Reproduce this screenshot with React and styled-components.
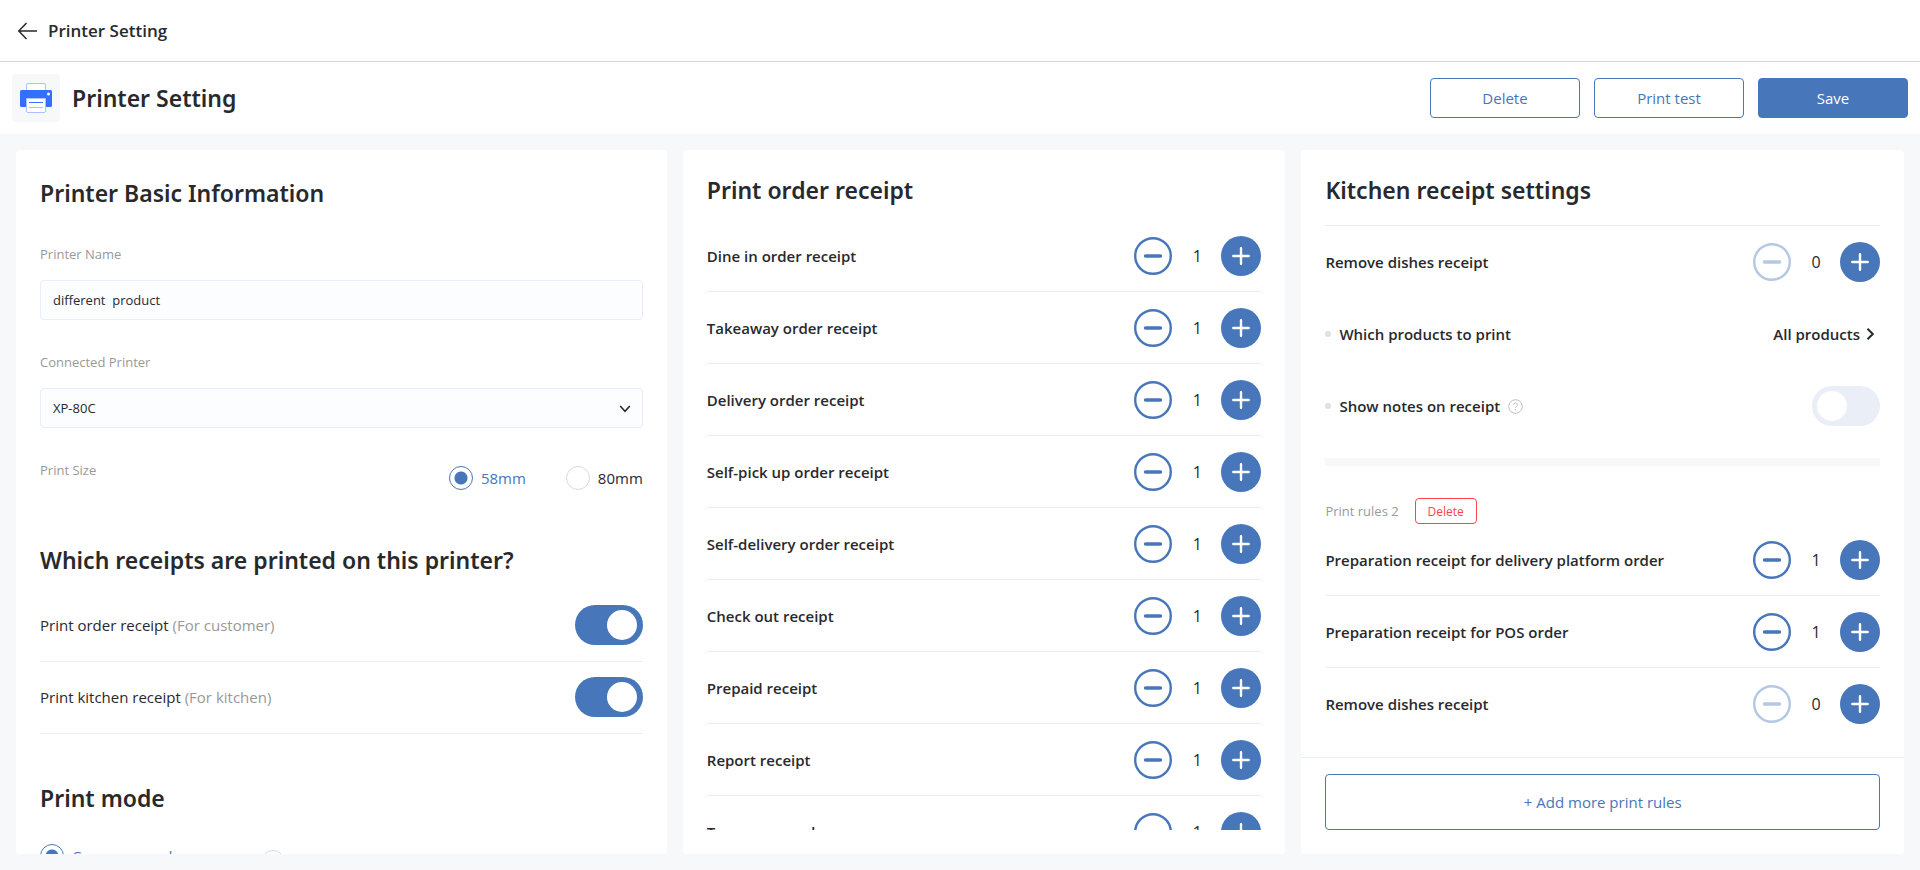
import React, { useState } from "react";
import styled, { createGlobalStyle } from "styled-components";

const blue = "#4776ba";
const ink = "#28292d";
const grey = "#999999";
const line = "#e6eef8";
const pale = "#f7f8fa";

const GlobalStyle = createGlobalStyle`
  * {
    box-sizing: border-box;
  }
  body {
    margin: 0;
    color: ${ink};
    background-color: ${pale};
    font-family: "Open Sans", "Noto Sans", sans-serif;
    font-size: 16px;
    line-height: 24px;
  }
  h1, h2 {
    font-family: "Noto Sans", "Open Sans", sans-serif;
    font-size: 23px;
    font-weight: 600;
  }
  button, input, select {
    font-family: inherit;
  }
`;

const Page = styled.div`
  height: 100vh;
  display: flex;
  flex-direction: column;
`;

const TopBar = styled.nav`
  height: 62px;
  flex-shrink: 0;
  padding: 0 16px;
  display: flex;
  align-items: center;
  background-color: white;
  border-bottom: 1px solid #d2d4dc;
`;

const BackLink = styled.a`
  display: flex;
  align-items: center;
  gap: 8px;
  color: ${ink};
  font-size: 17px;
  font-weight: 600;
  text-decoration: none;
`;

const Header = styled.header`
  height: 72px;
  flex-shrink: 0;
  padding: 0 12px;
  display: flex;
  align-items: center;
  background-color: white;
`;

const IconBox = styled.div`
  width: 48px;
  height: 48px;
  margin-right: 12px;
  border-radius: 4px;
  background-color: ${pale};
`;

const Title = styled.h1`
  margin: 0;
  line-height: 33px;
`;

const Actions = styled.div`
  margin-left: auto;
  display: flex;
  gap: 14px;
`;

const Button = styled.button`
  width: 150px;
  height: 40px;
  border: 1px solid ${blue};
  border-radius: 4px;
  color: ${(p) => (p.$filled ? "white" : blue)};
  background-color: ${(p) => (p.$filled ? blue : "white")};
  font-size: 15px;
  cursor: pointer;
`;

const Main = styled.main`
  flex: 1;
  min-height: 0;
  padding: 16px;
  display: grid;
  grid-template-columns: 1.08fr 1fr 1fr;
  grid-template-rows: minmax(0, 1fr);
  gap: 16px;
`;

const Card = styled.section`
  min-width: 0;
  display: flex;
  flex-direction: column;
  overflow: hidden;
  border-radius: 4px;
  background-color: white;
`;

const Scroll = styled.div`
  flex: 1;
  min-height: 0;
  padding: ${(p) => (p.$padded ? "24px" : "0 24px")};
  overflow-y: auto;
  scrollbar-width: none;
`;

const CardFoot = styled.div`
  height: 24px;
  flex-shrink: 0;
`;

const CardTitle = styled.h2`
  margin: 24px 24px ${(p) => (p.$ruled ? 18 : 13)}px;
  line-height: 33px;
`;

const FormTitle = styled.h2`
  margin: 0 0 32px;
  line-height: 38px;
`;

const SectionTitle = styled.h2`
  margin: 48px 0 13px;
  line-height: 33px;
`;

const Field = styled.div`
  display: flex;
  flex-direction: column;
  gap: 16px;
  margin-bottom: 32px;
`;

const Label = styled.label`
  color: ${grey};
  font-size: 13px;
  line-height: 20px;
`;

const Input = styled.input`
  height: 40px;
  width: 100%;
  padding: 0 12px;
  border: 1px solid #e6edfb;
  border-radius: 4px;
  color: ${ink};
  background-color: #fcfdff;
  font-size: 13px;
`;

const SelectWrap = styled.div`
  display: grid;
  align-items: center;

  > * {
    grid-area: 1 / 1;
  }
  svg {
    justify-self: end;
    margin-right: 12px;
    pointer-events: none;
  }
`;

const Select = styled.select`
  height: 40px;
  width: 100%;
  padding: 0 12px;
  appearance: none;
  border: 1px solid #e6edfb;
  border-radius: 4px;
  color: ${ink};
  background-color: #fcfdff;
  font-size: 13px;
`;

const SizeRow = styled.div`
  display: flex;
  justify-content: space-between;
  align-items: flex-start;
`;

const SizeLabel = styled.span`
  color: ${grey};
  font-size: 13px;
  line-height: 20px;
`;

const SizeOptions = styled.div`
  height: 36px;
  display: flex;
  align-items: center;
  gap: 40px;
`;

const ModeOptions = styled.div`
  padding-top: 16px;
  display: flex;
  align-items: flex-start;
  gap: 80px;
`;

const RadioLabel = styled.label`
  display: flex;
  align-items: center;
  gap: 8px;
  padding-top: ${(p) => (p.$lower ? 6 : 0)}px;
  font-size: 15px;
  color: ${(p) => (p.$on ? blue : ink)};
`;

const Radio = styled.input`
  appearance: none;
  width: 24px;
  height: 24px;
  margin: 0;
  border: 1px solid #d5d9e2;
  border-radius: 50%;

  &:checked {
    border-color: ${blue};
    background: radial-gradient(circle, ${blue} 6px, transparent 7px);
  }
`;

const ToggleRow = styled.label`
  padding: 15px 0 16px;
  display: flex;
  justify-content: space-between;
  align-items: center;
  border-bottom: 1px solid ${line};
  font-size: 15px;
`;

const Muted = styled.span`
  color: ${grey};
`;

const Toggle = styled.input`
  appearance: none;
  width: 68px;
  height: 40px;
  margin: 0;
  padding: 5px;
  display: flex;
  border-radius: 20px;
  background-color: #e9eef7;
  cursor: pointer;

  &::before {
    content: "";
    width: 30px;
    height: 30px;
    border-radius: 50%;
    background-color: white;
  }
  &:checked {
    padding-right: 6px;
    justify-content: flex-end;
    background-color: ${blue};
  }
`;

const Row = styled.div`
  height: 72px;
  padding: 16px 0 15px;
  display: flex;
  align-items: center;
  border-bottom: 1px solid ${(p) => (p.$plain ? "transparent" : line)};
  font-size: 15px;
  font-weight: 600;
`;

const RowEnd = styled.div`
  margin-left: auto;
  display: flex;
  align-items: center;
`;

const Rule = styled.hr`
  height: ${(p) => p.$size}px;
  margin: 0;
  border: none;
  background-color: ${(p) => (p.$size > 1 ? pale : line)};
`;

const RuleGap = styled.div`
  height: 16px;
`;

const RoundButton = styled.button`
  width: 40px;
  height: 40px;
  padding: 0;
  display: block;
  border: none;
  background: none;
  cursor: pointer;

  &:disabled {
    opacity: 0.4;
    cursor: default;
  }
  svg {
    display: block;
  }
`;

const Count = styled.output`
  width: 48px;
  text-align: center;
  font-size: 16px;
  font-weight: 400;
`;

const Dot = styled.span`
  width: 6px;
  height: 6px;
  margin-right: 8px;
  border-radius: 50%;
  background-color: #e0e1e3;
`;

const HelpButton = styled.button`
  margin-left: 8px;
  padding: 0;
  display: flex;
  border: none;
  background: none;
`;

const LinkButton = styled.button`
  padding: 0 4px 0 0;
  display: flex;
  align-items: center;
  gap: 4px;
  border: none;
  background: none;
  color: ${ink};
  font-size: 15px;
  font-weight: 600;
`;

const RuleHead = styled.div`
  margin-top: 32px;
  display: flex;
  align-items: center;
  gap: 16px;
  color: ${grey};
  font-size: 13px;
`;

const DeleteRule = styled.button`
  width: 62px;
  height: 26px;
  padding: 0;
  border: 1px solid #ff4448;
  border-radius: 4px;
  color: #ff4448;
  background-color: white;
  font-size: 12px;
`;

const Footer = styled.footer`
  padding: 16px 24px 24px;
  border-top: 1px solid ${line};
`;

const AddButton = styled(Button)`
  display: block;
  width: 100%;
  height: 56px;
`;

const BackArrow = () => (
  <svg width="24" height="24" viewBox="0 0 24 24" fill="none" stroke={ink} strokeWidth="1.5">
    <path d="M21 12H3M10.5 4L2.8 12l7.7 8" />
  </svg>
);

const PrinterIcon = () => (
  <svg width="48" height="48" viewBox="0 0 48 48" fill="none">
    <rect x="14.5" y="9.5" width="19" height="10" rx="1.5" fill="white" stroke="#a9c2ff" />
    <rect x="8" y="16" width="32" height="17" rx="1.5" fill="#3370ff" />
    <path d="M14.5 24.5h19V37a1.5 1.5 0 0 1-1.5 1.5H16a1.5 1.5 0 0 1-1.5-1.5z" fill="white" stroke="#a9c2ff" />
    <path d="M17 28.5h14" stroke="#3370ff" />
    <path d="M17 33.5h14" stroke="#a9c2ff" />
    <circle cx="36.5" cy="20" r="1.5" fill="white" />
  </svg>
);

const Chevron = ({ down }) => (
  <svg width="12" height="12" viewBox="0 0 12 12" fill="none" stroke={ink} strokeWidth={down ? 1.6 : 2}>
    <path d={down ? "M1.2 4L6 9.2 10.8 4" : "M3.5 0.7L8.8 6l-5.3 5.3"} />
  </svg>
);

const HelpIcon = () => (
  <svg width="15" height="15" viewBox="0 0 15 15" fill="none" stroke="#bfbfbf">
    <circle cx="7.5" cy="7.5" r="6.8" />
    <path d="M5.6 5.9a1.9 1.9 0 1 1 2.7 1.7c-.6.3-.8.5-.8 1.200M7.5 10v1.200" />
  </svg>
);

const Stepper = ({ name, start }) => {
  const [count, setCount] = useState(start);
  return (
    <RowEnd>
      <RoundButton
        aria-label={`Decrease ${name}`}
        disabled={count === 0}
        onClick={() => setCount(count - 1)}
      >
        <svg width="40" height="40" viewBox="0 0 40 40" fill="none" stroke={blue}>
          <circle cx="20" cy="20" r="17.8" strokeWidth="2.4" />
          <path d="M12.5 20h15" strokeWidth="3.4" strokeLinecap="round" />
        </svg>
      </RoundButton>
      <Count>{count}</Count>
      <RoundButton aria-label={`Increase ${name}`} onClick={() => setCount(count + 1)}>
        <svg width="40" height="40" viewBox="0 0 40 40" fill="none" stroke="white">
          <circle cx="20" cy="20" r="20" fill={blue} stroke="none" />
          <path d="M12.3 20h15.4M20 12.3v15.4" strokeWidth="2.4" strokeLinecap="round" />
        </svg>
      </RoundButton>
    </RowEnd>
  );
};

const CountRow = ({ name, count, plain }) => (
  <Row $plain={plain}>
    {name}
    <Stepper name={name} start={count} />
  </Row>
);

const RadioOption = ({ group, value, current, onPick, lower }) => (
  <RadioLabel $on={current === value} $lower={lower}>
    <Radio
      type="radio"
      name={group}
      checked={current === value}
      onChange={() => onPick(value)}
    />
    {value}
  </RadioLabel>
);

const orderReceipts = [
  "Dine in order receipt",
  "Takeaway order receipt",
  "Delivery order receipt",
  "Self-pick up order receipt",
  "Self-delivery order receipt",
  "Check out receipt",
  "Prepaid receipt",
  "Report receipt",
  "Temporary order",
];

const BasicInfo = () => {
  const [size, setSize] = useState("58mm");
  const [mode, setMode] = useState("Common mode");
  return (
    <Card>
      <Scroll $padded>
        <FormTitle>Printer Basic Information</FormTitle>
        <Field>
          <Label htmlFor="name">Printer Name</Label>
          <Input id="name" defaultValue="different  product" />
        </Field>
        <Field>
          <Label htmlFor="printer">Connected Printer</Label>
          <SelectWrap>
            <Select id="printer">
              <option>XP-80C</option>
            </Select>
            <Chevron down />
          </SelectWrap>
        </Field>
        <SizeRow role="radiogroup" aria-labelledby="size">
          <SizeLabel id="size">Print Size</SizeLabel>
          <SizeOptions>
            <RadioOption group="size" value="58mm" current={size} onPick={setSize} />
            <RadioOption group="size" value="80mm" current={size} onPick={setSize} />
          </SizeOptions>
        </SizeRow>
        <SectionTitle>Which receipts are printed on this printer?</SectionTitle>
        <ToggleRow>
          <span>
            Print order receipt <Muted>(For customer)</Muted>
          </span>
          <Toggle type="checkbox" defaultChecked />
        </ToggleRow>
        <ToggleRow>
          <span>
            Print kitchen receipt <Muted>(For kitchen)</Muted>
          </span>
          <Toggle type="checkbox" defaultChecked />
        </ToggleRow>
        <SectionTitle>Print mode</SectionTitle>
        <ModeOptions>
          <RadioOption group="mode" value="Common mode" current={mode} onPick={setMode} />
          <RadioOption group="mode" value="Label mode" current={mode} onPick={setMode} lower />
        </ModeOptions>
      </Scroll>
    </Card>
  );
};

const OrderReceipts = () => (
  <Card>
    <CardTitle>Print order receipt</CardTitle>
    <Scroll>
      {orderReceipts.map((name) => (
        <CountRow key={name} name={name} count={1} />
      ))}
    </Scroll>
    <CardFoot />
  </Card>
);

const KitchenSettings = () => (
  <Card>
    <CardTitle $ruled>Kitchen receipt settings</CardTitle>
    <Scroll>
      <Rule $size={1} />
      <CountRow name="Remove dishes receipt" count={0} plain />
      <Row $plain>
        <Dot />
        Which products to print
        <RowEnd>
          <LinkButton>
            All products
            <Chevron />
          </LinkButton>
        </RowEnd>
      </Row>
      <Row $plain>
        <Dot />
        <label htmlFor="notes">Show notes on receipt</label>
        <HelpButton aria-label="Help">
          <HelpIcon />
        </HelpButton>
        <RowEnd>
          <Toggle id="notes" type="checkbox" />
        </RowEnd>
      </Row>
      <RuleGap />
      <Rule $size={8} />
      <RuleHead>
        Print rules 2<DeleteRule>Delete</DeleteRule>
      </RuleHead>
      <CountRow name="Preparation receipt for delivery platform order" count={1} />
      <CountRow name="Preparation receipt for POS order" count={1} />
      <CountRow name="Remove dishes receipt" count={0} plain />
    </Scroll>
    <Footer>
      <AddButton>+ Add more print rules</AddButton>
    </Footer>
  </Card>
);

const App = () => {
  return (
    <Page>
      <GlobalStyle />
      <TopBar>
        <BackLink href="#">
          <BackArrow />
          Printer Setting
        </BackLink>
      </TopBar>
      <Header>
        <IconBox>
          <PrinterIcon />
        </IconBox>
        <Title>Printer Setting</Title>
        <Actions>
          <Button>Delete</Button>
          <Button>Print test</Button>
          <Button $filled>Save</Button>
        </Actions>
      </Header>
      <Main>
        <BasicInfo />
        <OrderReceipts />
        <KitchenSettings />
      </Main>
    </Page>
  );
};

export default App;
